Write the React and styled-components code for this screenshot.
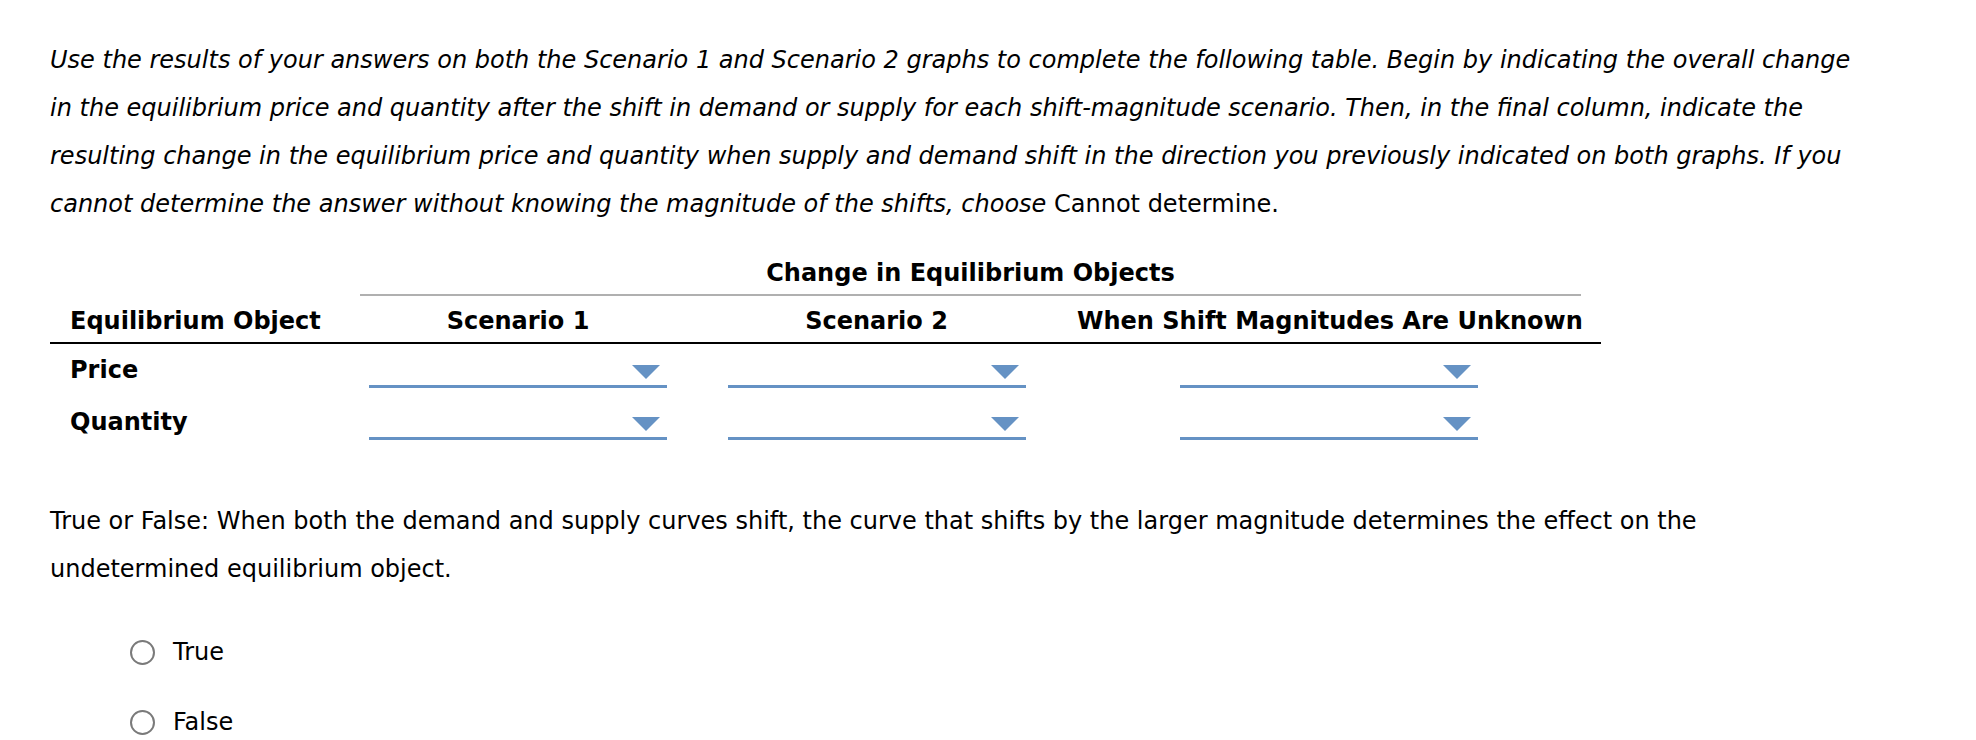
import React from "react";
import styled, { createGlobalStyle } from "styled-components";

const GlobalStyle = createGlobalStyle`
  html, body {
    margin: 0;
    padding: 0;
    background: #ffffff;
  }
  body {
    font-family: "DejaVu Sans", Verdana, sans-serif;
    color: #000000;
  }
`;

const Page = styled.main`
  padding: 36px 0 0 50px;
`;

const Prompt = styled.p`
  margin: 0;
  font-size: 24px;
  line-height: 48px;
  font-style: italic;
  white-space: nowrap;
`;

const Upright = styled.span`
  font-style: normal;
`;

const Table = styled.div`
  margin-top: 31px;
  display: grid;
  grid-template-columns: 310px 316px 401px 524px;
  font-size: 24px;
`;

const GroupHeader = styled.div`
  grid-column: 2 / 5;
  margin-right: 20px;
  text-align: center;
  font-weight: bold;
  line-height: 28px;
  padding-bottom: 7px;
  border-bottom: 2px solid #b0b0b0;
  white-space: nowrap;
`;

const HeadCell = styled.div`
  font-weight: bold;
  line-height: 28px;
  padding: 11px ${(p) => (p.$last ? "20px" : "0")} 7px ${(p) => (p.$first ? "20px" : "0")};
  text-align: ${(p) => (p.$first ? "left" : "center")};
  border-bottom: 2px solid #000000;
  white-space: nowrap;
`;

const LabelCell = styled.div`
  height: 52px;
  display: flex;
  align-items: center;
  padding-left: 20px;
  font-weight: bold;
`;

const SelectCell = styled.div`
  height: 52px;
  display: flex;
  align-items: center;
  justify-content: center;
  padding-right: ${(p) => (p.$last ? "20px" : "0")};
`;

const Dropdown = styled.div`
  box-sizing: border-box;
  width: 298px;
  height: 30px;
  margin-top: 6px;
  border-bottom: 3px solid #6592c4;
  display: flex;
  justify-content: flex-end;
  align-items: center;
  padding-right: 7px;
  cursor: pointer;
`;

const Caret = styled.span`
  width: 0;
  height: 0;
  border-left: 14px solid transparent;
  border-right: 14px solid transparent;
  border-top: 14px solid #6592c4;
`;

const Question = styled.p`
  margin: 49px 0 0;
  font-size: 24px;
  line-height: 48px;
  white-space: nowrap;
`;

const RadioList = styled.div`
  margin-top: 24px;
  padding-left: 80px;
`;

const RadioRow = styled.label`
  height: 70px;
  display: flex;
  align-items: center;
  gap: 18px;
  font-size: 24px;
  cursor: pointer;
`;

const RadioCircle = styled.span`
  box-sizing: border-box;
  width: 25px;
  height: 25px;
  border-radius: 50%;
  border: 2px solid #7a7a7a;
  background: #ffffff;
`;

const columns = ["Scenario 1", "Scenario 2", "When Shift Magnitudes Are Unknown"];
const rows = ["Price", "Quantity"];

export default function App() {
  return (
    <>
      <GlobalStyle />
      <Page>
        <Prompt>
          Use the results of your answers on both the Scenario 1 and Scenario 2 graphs to complete the following table. Begin by indicating the overall change
          <br />
          in the equilibrium price and quantity after the shift in demand or supply for each shift-magnitude scenario. Then, in the final column, indicate the
          <br />
          resulting change in the equilibrium price and quantity when supply and demand shift in the direction you previously indicated on both graphs. If you
          <br />
          cannot determine the answer without knowing the magnitude of the shifts, choose <Upright>Cannot determine.</Upright>
        </Prompt>

        <Table>
          <GroupHeader>Change in Equilibrium Objects</GroupHeader>
          <HeadCell $first>Equilibrium Object</HeadCell>
          {columns.map((c, i) => (
            <HeadCell key={c} $last={i === columns.length - 1}>
              {c}
            </HeadCell>
          ))}
          {rows.map((r) => (
            <React.Fragment key={r}>
              <LabelCell>{r}</LabelCell>
              {columns.map((c, i) => (
                <SelectCell key={c} $last={i === columns.length - 1}>
                  <Dropdown>
                    <Caret />
                  </Dropdown>
                </SelectCell>
              ))}
            </React.Fragment>
          ))}
        </Table>

        <Question>
          True or False: When both the demand and supply curves shift, the curve that shifts by the larger magnitude determines the effect on the
          <br />
          undetermined equilibrium object.
        </Question>

        <RadioList>
          <RadioRow>
            <RadioCircle />
            True
          </RadioRow>
          <RadioRow>
            <RadioCircle />
            False
          </RadioRow>
        </RadioList>
      </Page>
    </>
  );
}
